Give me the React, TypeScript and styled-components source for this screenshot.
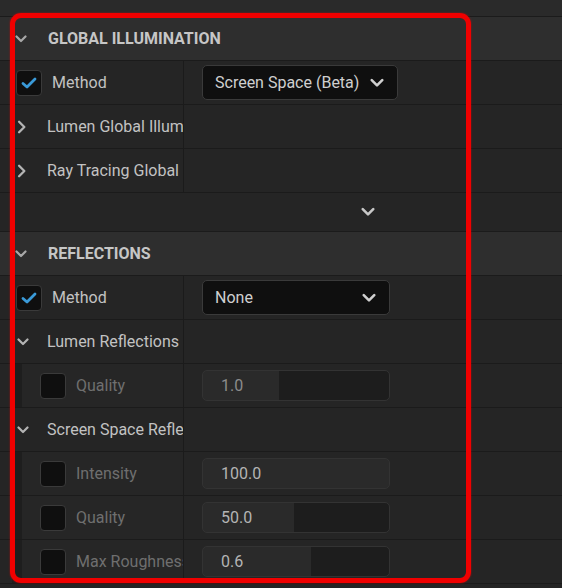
import React from 'react'
import styled, { createGlobalStyle } from 'styled-components'

const GlobalStyle = createGlobalStyle`
	html, body {
		margin: 0;
		padding: 0;
		background: #242424;
	}
	body {
		font-family: Roboto, "Noto Sans", "Liberation Sans", sans-serif;
		overflow: hidden;
	}
	svg {
		flex-shrink: 0;
	}
`

// layout
const Panel = styled.div`
	position: relative;
	width: 562px;
	height: 588px;
	display: flex;
	flex-direction: column;
	background: #242424;
	overflow: hidden;
`

const TopStrip = styled.div`
	flex: 0 0 16px;
	background: #2a2a2a;
	border-bottom: 1px solid #1b1b1b;
`

const SectionHeader = styled.div`
	flex: 0 0 43px;
	display: flex;
	align-items: center;
	gap: 21px;
	padding-left: 15px;
	background: #2e2e2e;
	border-bottom: 1px solid #1b1b1b;
	color: #c6c6c6;
	font-size: 16px;
	font-weight: 700;
`

const Row = styled.div<{ $h?: number }>`
	flex: 0 0 ${(p) => p.$h || 43}px;
	display: grid;
	grid-template-columns: 184px 1fr;
	background: #252525;
	border-bottom: 1px solid #1b1b1b;
`

const NameCell = styled.div<{ $indent?: boolean; $pad?: number }>`
	display: flex;
	align-items: center;
	gap: 10px;
	padding-left: ${(p) => p.$pad ?? 16}px;
	border-right: 1px solid #1b1b1b;
	overflow: hidden;
	white-space: nowrap;
	background: ${(p) =>
		p.$indent
			? 'linear-gradient(to right, #252525 0 12px, #1e1e1e 12px 22px, #262626 22px)'
			: 'transparent'};
`

const ValueCell = styled.div`
	display: flex;
	align-items: center;
	padding-left: 18px;
`

const Label = styled.span<{ $dim?: boolean }>`
	flex-shrink: 0;
	font-size: 16px;
	color: ${(p) => (p.$dim ? '#6f6f6f' : '#c2c2c2')};
`

const GroupLabel = styled(Label)`
	margin-left: 8px;
`

const Box = styled.div`
	flex: 0 0 26px;
	width: 26px;
	height: 26px;
	box-sizing: border-box;
	border-radius: 4px;
	background: #0f0f0f;
	border: 1px solid #3a3a3a;
	display: flex;
	align-items: center;
	justify-content: center;
`

const Dropdown = styled.div<{ $w: number }>`
	width: ${(p) => p.$w}px;
	height: 35px;
	box-sizing: border-box;
	display: flex;
	align-items: center;
	justify-content: space-between;
	padding: 0 13px 0 12px;
	background: #0f0f0f;
	border: 1px solid #3a3a3a;
	border-radius: 5px;
	color: #cfcfcf;
	font-size: 16px;
`

const NumberField = styled.div<{ $fill: number; $dim?: boolean }>`
	width: 188px;
	height: 31px;
	box-sizing: border-box;
	display: flex;
	align-items: center;
	padding-left: 18px;
	border: 1px solid #333333;
	border-radius: 5px;
	background: linear-gradient(
		to right,
		#2a2a2a 0 ${(p) => p.$fill}%,
		#1d1d1d ${(p) => p.$fill}% 100%
	);
	color: ${(p) => (p.$dim ? '#8c8c8c' : '#b4b4b4')};
	font-size: 16px;
`

const ExpandCell = styled.div`
	display: flex;
	align-items: center;
	padding-left: 177px;
	grid-column: 2;
`

// the red annotation frame drawn over the panel
const Highlight = styled.div`
	position: absolute;
	left: 10px;
	top: 13px;
	width: 461px;
	height: 570px;
	box-sizing: border-box;
	border: 5px solid #f00000;
	border-radius: 11px;
	box-shadow: 0 0 2px rgba(255, 0, 0, 0.6);
	pointer-events: none;
`

// icons
const ChevronDown = ({ size = 12, color = '#a8a8a8' }: { size?: number; color?: string }) => (
	<svg width={size} height={size} viewBox="0 0 12 12">
		<polyline
			points="1.5,3.5 6,8 10.5,3.5"
			fill="none"
			stroke={color}
			strokeWidth="2.2"
			strokeLinecap="round"
			strokeLinejoin="round"
		/>
	</svg>
)

const ChevronRight = () => (
	<svg width="14" height="14" viewBox="0 0 12 12">
		<polyline
			points="3.5,1.5 8,6 3.5,10.5"
			fill="none"
			stroke="#b4b4b4"
			strokeWidth="2"
			strokeLinecap="round"
			strokeLinejoin="round"
		/>
	</svg>
)

const Check = () => (
	<svg width="16" height="14" viewBox="0 0 16 14">
		<polyline
			points="2,7.5 6,11 14,3"
			fill="none"
			stroke="#3a9ad8"
			strokeWidth="2.8"
			strokeLinecap="round"
			strokeLinejoin="round"
		/>
	</svg>
)

const Checkbox = ({ checked }: { checked?: boolean }) => <Box>{checked && <Check />}</Box>

const PropRow = (props: { label: string; checked?: boolean; children: React.ReactNode }) => (
	<Row>
		<NameCell>
			<Checkbox checked={props.checked} />
			<Label>{props.label}</Label>
		</NameCell>
		<ValueCell>{props.children}</ValueCell>
	</Row>
)

const NestedRow = (props: { label: string; value: string; fill: number; dim?: boolean }) => (
	<Row>
		<NameCell $indent $pad={40}>
			<Checkbox />
			<Label $dim>{props.label}</Label>
		</NameCell>
		<ValueCell>
			<NumberField $fill={props.fill} $dim={props.dim}>
				{props.value}
			</NumberField>
		</ValueCell>
	</Row>
)

const GroupRow = (props: { label: string; open?: boolean }) => (
	<Row>
		<NameCell $pad={props.open ? 17 : 15}>
			{props.open ? <ChevronDown color="#b4b4b4" /> : <ChevronRight />}
			<GroupLabel>{props.label}</GroupLabel>
		</NameCell>
		<ValueCell />
	</Row>
)

const App = () => {
	return (
		<>
			<GlobalStyle />
			<Panel>
				<TopStrip />

				<SectionHeader>
					<ChevronDown />
					<span>GLOBAL ILLUMINATION</span>
				</SectionHeader>
				<PropRow label="Method" checked>
					<Dropdown $w={196}>
						<span>Screen Space (Beta)</span>
						<ChevronDown size={14} color="#d0d0d0" />
					</Dropdown>
				</PropRow>
				<GroupRow label="Lumen Global Illumination" />
				<GroupRow label="Ray Tracing Global Illumination" />
				<Row $h={38}>
					<ExpandCell>
						<ChevronDown size={14} color="#c8c8c8" />
					</ExpandCell>
				</Row>

				<SectionHeader>
					<ChevronDown />
					<span>REFLECTIONS</span>
				</SectionHeader>
				<PropRow label="Method" checked>
					<Dropdown $w={188}>
						<span>None</span>
						<ChevronDown size={14} color="#d0d0d0" />
					</Dropdown>
				</PropRow>
				<GroupRow label="Lumen Reflections" open />
				<NestedRow label="Quality" value="1.0" fill={41} dim />
				<GroupRow label="Screen Space Reflections" open />
				<NestedRow label="Intensity" value="100.0" fill={100} />
				<NestedRow label="Quality" value="50.0" fill={49} />
				<NestedRow label="Max Roughness" value="0.6" fill={58} />

				<Highlight />
			</Panel>
		</>
	)
}

export default App
